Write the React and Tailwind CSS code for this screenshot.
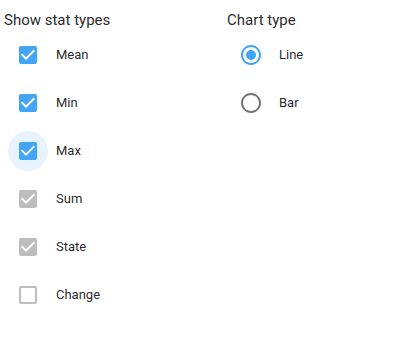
import React from "react";

const CHECKED =
  "M19 3H5c-1.11 0-2 .9-2 2v14c0 1.1.89 2 2 2h14c1.11 0 2-.9 2-2V5c0-1.1-.89-2-2-2zm-9 14l-5-5 1.41-1.41L10 14.17l7.59-7.59L19 8l-9 9z";
const UNCHECKED =
  "M19 5v14H5V5h14m0-2H5c-1.1 0-2 .9-2 2v14c0 1.1.9 2 2 2h14c1.1 0 2-.9 2-2V5c0-1.1-.9-2-2-2z";
const RING =
  "M12 2C6.48 2 2 6.48 2 12s4.48 10 10 10 10-4.48 10-10S17.52 2 12 2zm0 18c-4.42 0-8-3.58-8-8s3.58-8 8-8 8 3.58 8 8-3.58 8-8 8z";

function CheckRow({ label, checked, disabled, hover }) {
  const color = disabled ? "#bdbdbd" : checked ? "#42a5f5" : "#bdbdbd";
  return (
    <div className="flex h-[48px] items-center">
      <div className="relative ml-[7px] flex h-[42px] w-[42px] items-center justify-center">
        {hover && (
          <div className="absolute left-[1px] top-[1px] h-[40px] w-[40px] rounded-full bg-[#e8f3fd]" />
        )}
        <svg viewBox="0 0 24 24" width="24" height="24" className="relative">
          <path d={checked ? CHECKED : UNCHECKED} fill={color} />
        </svg>
      </div>
      <span className="ml-[7px] text-[13px] text-[rgba(0,0,0,0.87)]">{label}</span>
    </div>
  );
}

function RadioRow({ label, checked }) {
  const color = checked ? "#42a5f5" : "#757575";
  return (
    <div className="flex h-[48px] items-center">
      <div className="ml-[7px] flex h-[42px] w-[42px] items-center justify-center">
        <svg viewBox="0 0 24 24" width="24" height="24">
          <path d={RING} fill={color} />
          {checked && <circle cx="12" cy="12" r="5" fill={color} />}
        </svg>
      </div>
      <span className="ml-[7px] text-[13px] text-[rgba(0,0,0,0.87)]">{label}</span>
    </div>
  );
}

export default function App() {
  return (
    <div
      className="flex h-[345px] w-[418px] bg-white"
      style={{ fontFamily: "Roboto, 'Liberation Sans', sans-serif" }}
    >
      <div className="w-[223px]">
        <div className="h-[31px] pl-[4px] pt-[10px] text-[15px] leading-[20px] text-[rgba(0,0,0,0.87)]">
          Show stat types
        </div>
        <CheckRow label="Mean" checked />
        <CheckRow label="Min" checked />
        <CheckRow label="Max" checked hover />
        <CheckRow label="Sum" checked disabled />
        <CheckRow label="State" checked disabled />
        <CheckRow label="Change" />
      </div>
      <div className="flex-1">
        <div className="h-[31px] pl-[4px] pt-[10px] text-[15px] leading-[20px] text-[rgba(0,0,0,0.87)]">
          Chart type
        </div>
        <RadioRow label="Line" checked />
        <RadioRow label="Bar" />
      </div>
    </div>
  );
}
